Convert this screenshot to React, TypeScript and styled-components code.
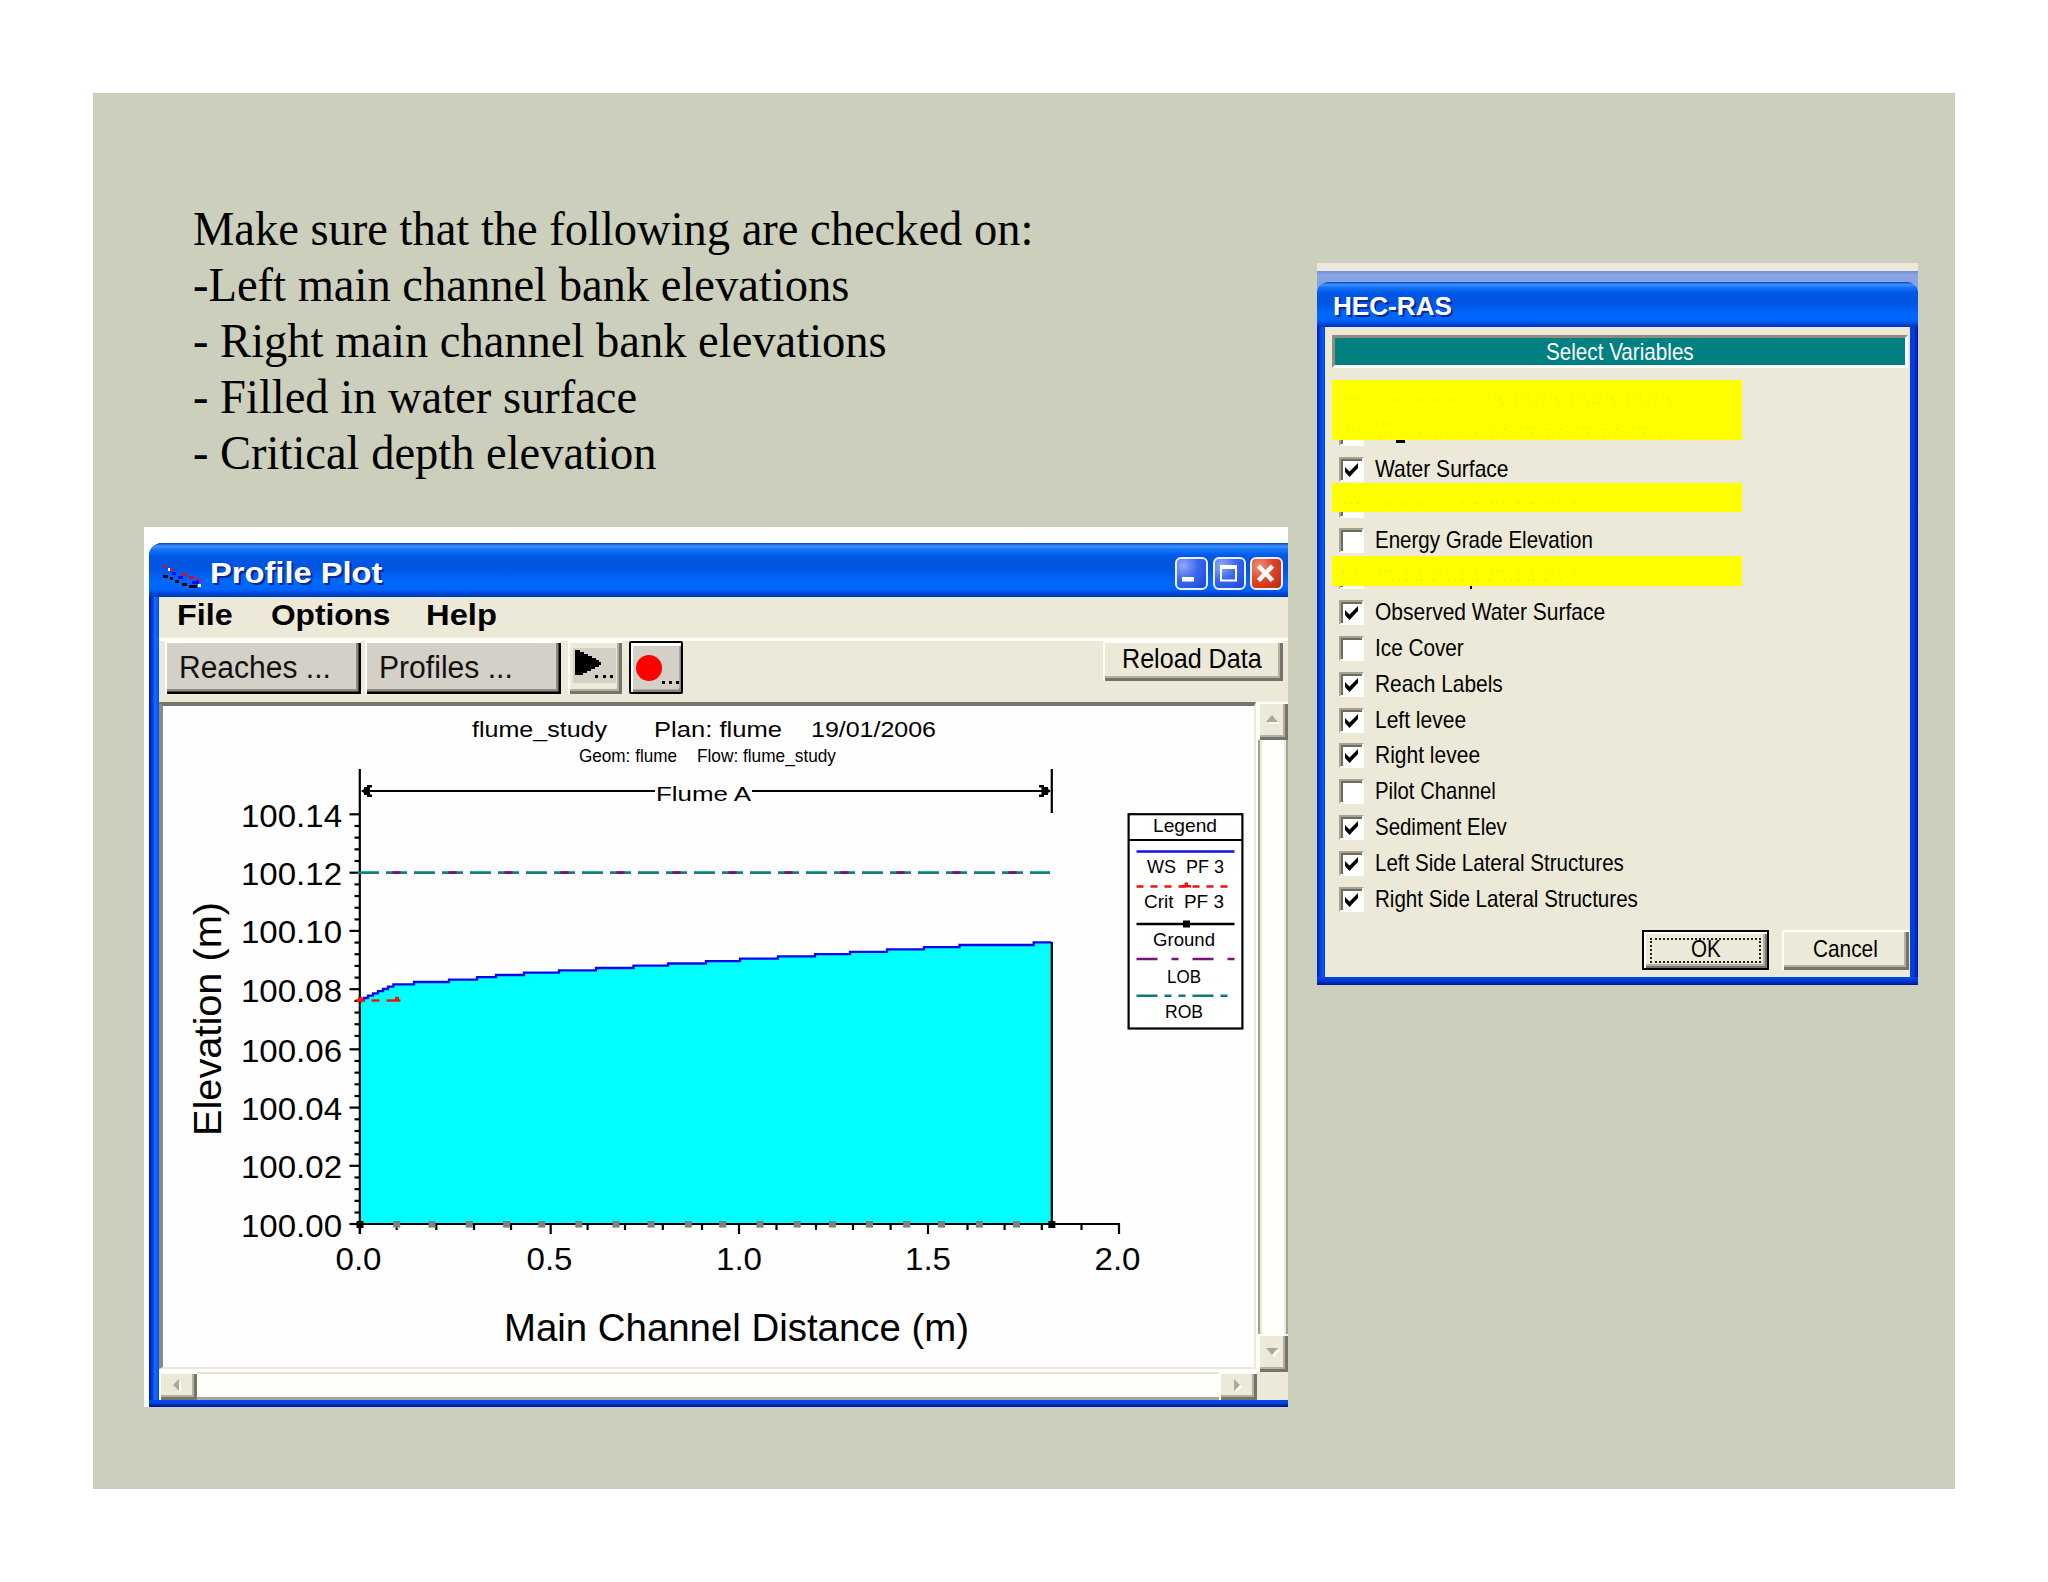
import React, { useLayoutEffect, useRef, useState } from "react";
import styled, { createGlobalStyle, css } from "styled-components";

const Global = createGlobalStyle`
  body { margin: 0; background: #fff; }
  * { box-sizing: border-box; }
`;

const sans = `"Liberation Sans", Arial, sans-serif`;

/* ---------- text that is stretched to a given width ---------- */

const FitBox = styled.span<{ $w: number }>`
  display: block;
  flex: none;
  width: ${(p) => p.$w}px;
  white-space: pre;
`;
const FitInner = styled.span`
  display: inline-block;
  transform-origin: 0 50%;
`;

function Fit({ w, children }: { w: number; children: string }) {
  const ref = useRef<HTMLSpanElement>(null);
  const [scale, setScale] = useState(1);
  useLayoutEffect(() => {
    if (ref.current) setScale(w / ref.current.offsetWidth);
  }, [w, children]);
  return (
    <FitBox $w={w}>
      <FitInner ref={ref} style={{ transform: `scaleX(${scale})` }}>
        {children}
      </FitInner>
    </FitBox>
  );
}

/* ---------- slide ---------- */

const Page = styled.div`
  width: 2048px;
  height: 1582px;
  padding: 93px 93px 93px 93px;
  background: #fff;
`;
const Slide = styled.main`
  display: flex;
  align-items: flex-start;
  gap: 29px;
  height: 1396px;
  padding-left: 51px;
  background: #cccfbc;
`;
const LeftColumn = styled.div`
  display: flex;
  flex-direction: column;
  gap: 46px;
  width: 1144px;
  padding-top: 108px;
`;
const Note = styled.div`
  padding-left: 49px;
  font: 48.6px/56px "Liberation Serif", "Times New Roman", serif;
  color: #000;
`;

/* ---------- shared window parts ---------- */

const titleGradient = css`
  background: linear-gradient(
    to bottom,
    #0b43c6 0,
    #3f93ff 6%,
    #1475f8 12%,
    #0058e6 24%,
    #0054e0 45%,
    #005ef2 60%,
    #0068ff 72%,
    #0064fb 86%,
    #0045d4 94%,
    #0034bd 100%
  );
`;
const raised = css`
  background: #ece9d8;
  box-shadow:
    inset 2px 2px 0 #fffffb,
    inset -3px -3px 0 #75736a,
    inset -5px -5px 0 #b3b0a1;
`;

/* ---------- profile plot window ---------- */

const PlotShot = styled.section`
  height: 880px;
  padding: 16px 0 0 5px;
  background: #fff;
`;
const PlotWindow = styled.div`
  display: flex;
  flex-direction: column;
  height: 864px;
  border-radius: 13px 0 0 0;
  overflow: hidden;
  background: #0044e0;
`;
const PlotTitle = styled.header`
  display: flex;
  align-items: center;
  flex: none;
  height: 54px;
  padding: 5px 5px 0 13px;
  ${titleGradient}
  font: bold 30px/44px ${sans};
  color: #fff;
  text-shadow: 2px 2px 0 #0a2a92;
`;
const TitleIcon = styled.svg`
  flex: none;
  width: 40px;
  height: 26px;
  margin: 6px 8px 0 0;
`;
const Captions = styled.div`
  display: flex;
  gap: 4.5px;
  margin-left: auto;
  padding-top: 2px;
`;
const Caption = styled.button<{ $close?: boolean }>`
  width: 33px;
  height: 33px;
  padding: 0;
  border: 2.5px solid #e9f0ff;
  border-radius: 6px;
  background: ${(p) =>
    p.$close
      ? "radial-gradient(circle at 25% 25%, #f0907a, #e0452a 45%, #b92a08)"
      : "radial-gradient(circle at 22% 22%, #92a9fa, #3c68ee 45%, #1845d8)"};
`;
const CaptionGlyph = styled.svg`
  display: block;
  width: 28px;
  height: 28px;
`;
const PlotBody = styled.div`
  display: flex;
  flex-direction: column;
  height: 803px;
  padding-left: 10px;
  background: linear-gradient(to right, #0019c0 0, #0033d6 3px, #1a6cff 6px, #0050e8 10px);
`;
const PlotFoot = styled.div`
  flex: 1;
  background: linear-gradient(to bottom, #0048ec, #003fdc 55%, #001c98 80%);
`;
const MenuBar = styled.nav`
  display: flex;
  flex: none;
  height: 44px;
  padding: 6px 0 0 18px;
  background: #ece9d8;
  border-bottom: 3px solid #fffffb;
  font: bold 29.5px/34px ${sans};
  color: #000;
`;
const MenuItem = styled.span<{ $gap: number }>`
  margin-right: ${(p) => p.$gap}px;
  line-height: 24px;
`;
const ToolBar = styled.div`
  display: flex;
  align-items: flex-start;
  flex: none;
  height: 61px;
  padding: 0 5px 0 6px;
  background: #ece9d8;
`;
const WideButton = styled.button`
  width: 196px;
  height: 53px;
  margin-right: 4px;
  padding: 0 0 0 14px;
  border: 0;
  background: #d4d0c8;
  box-shadow:
    inset 2px 2px 0 #fffffb,
    inset -2.5px -2.5px 0 #000,
    inset -5px -5px 0 #8c8a82;
  font: 31px/50px ${sans};
  color: #111;
  text-align: left;
`;
const IconButton = styled.button<{ $framed?: boolean }>`
  width: 54px;
  height: 53px;
  margin: 0 0 0 ${(p) => (p.$framed ? 7 : 3)}px;
  padding: 0;
  border: 0;
  ${raised}
  ${(p) =>
    p.$framed &&
    css`
      background: #d4d0c8;
      border-radius: 2px;
      box-shadow:
        inset 0 0 0 2px #000,
        inset 4px 5px 0 #fffffb,
        inset -3.5px -4.5px 0 #85837a;
    `}
`;
const ButtonArt = styled.svg`
  display: block;
  width: 54px;
  height: 53px;
`;
const ReloadButton = styled.button`
  width: 180px;
  height: 40px;
  margin-left: auto;
  padding: 0 0 4px 19px;
  border: 0;
  ${raised}
  font: 28px/36px ${sans};
  color: #000;
`;
const ViewRow = styled.div`
  display: flex;
  flex: none;
  height: 670px;
  background: #fffffb;
`;
const Canvas = styled.div`
  width: 1097px;
  height: 667px;
  border-top: 4px solid #77756b;
  border-left: 4px solid #8c8a80;
  border-right: 2px solid #ece9d8;
  border-bottom: 2px solid #ece9d8;
  background: #fefefe;
`;
const ChartSvg = styled.svg`
  display: block;
  width: 1091px;
  height: 660px;
  font-family: ${sans};
`;
const VScroll = styled.div`
  display: flex;
  flex-direction: column;
  justify-content: space-between;
  width: 30px;
  margin-left: 2px;
  background: linear-gradient(to right, #a3a092 0 2px, #ece9d8 2px 4px, #fffffb 4px 26px, #ece9d8 26px 28px, #a3a092 28px);
`;
const HRow = styled.div`
  display: flex;
  flex: none;
  height: 28px;
  background: #ece9d8;
`;
const HScroll = styled.div`
  display: flex;
  justify-content: space-between;
  width: 1098px;
  background: linear-gradient(to bottom, #e8e5d2 0 2px, #fffef9 2px 25px, #a9a698 25px);
`;
const ScrollButton = styled.button<{ $w: number; $h: number }>`
  display: flex;
  align-items: center;
  justify-content: center;
  width: ${(p) => p.$w}px;
  height: ${(p) => p.$h}px;
  padding: 0;
  border: 0;
  ${raised}
`;

type Dir = "up" | "down" | "left" | "right";
const arrows: Record<Dir, string> = {
  up: "M0 8 L6 1 L12 8Z",
  down: "M0 2 L12 2 L6 9Z",
  left: "M8 0 L2 6 L8 12Z",
  right: "M3 0 L9 6 L3 12Z",
};
function Scroller({ dir }: { dir: Dir }) {
  const vertical = dir === "up" || dir === "down";
  return (
    <ScrollButton $w={vertical ? 30 : 38} $h={vertical ? 38 : 28} aria-label={dir}>
      <svg width="14" height="14" viewBox="0 0 14 14">
        <path d={arrows[dir]} fill="#fffffb" transform="translate(2 2)" />
        <path d={arrows[dir]} fill="#aca899" />
      </svg>
    </ScrollButton>
  );
}

/* ---------- chart ---------- */

interface LabelProps {
  x: number;
  y: number;
  w: number;
  size: number;
  children: string;
}
function Label({ x, y, w, size, children }: LabelProps) {
  return (
    <text x={x} y={y} fontSize={size} textLength={w} lengthAdjust="spacingAndGlyphs" fill="#000">
      {children}
    </text>
  );
}

const yLabels: [string, number][] = [
  ["100.14", 814.3],
  ["100.12", 872.7],
  ["100.10", 930.9],
  ["100.08", 989.2],
  ["100.06", 1049.3],
  ["100.04", 1107.6],
  ["100.02", 1165.8],
  ["100.00", 1224],
];
const xLabels: [string, number, number][] = [
  ["0.0", 335.5, 46],
  ["0.5", 526.5, 46],
  ["1.0", 716, 46],
  ["1.5", 905, 46],
  ["2.0", 1094.5, 46],
];
const xMajor = [360, 550.7, 739, 928, 1119];
const xMinor = [396.7, 436.3, 474, 511, 587.6, 625, 662.8, 702, 776.5, 816, 853, 890.6, 967.5, 1004.6, 1041.8, 1081.5];
const stations = [396.7, 432, 469.3, 506.6, 541.8, 578.8, 616, 651, 688.3, 722.6, 760, 797.2, 832.4, 869.5, 906.7, 941.5, 979.4, 1016.5];

/* [x where the step starts, y of the step] */
const steps: [number, number][] = [
  [360, 1000], [364, 998], [368, 995.7], [373, 993.3], [378, 991.2], [383, 989], [388, 986.7],
  [393.4, 984.3], [414, 982], [449, 979.7], [477, 977.2], [496, 975], [524, 972.7],
  [559, 970.3], [596, 968], [633.5, 965.7], [668, 963.5], [706, 961.1], [740, 958.7],
  [778, 956.4], [815, 954.1], [850, 951.8], [887, 949.4], [924, 947.1], [959.5, 945],
  [1033.7, 942.4],
];
const surface =
  `M360 1000` + steps.map(([x, y]) => ` H${x} V${y}`).join("") + " H1051.5";

const legend: { text: string; y: number; base: number; x: number; w: number; color: string; dash?: string }[] = [
  { text: "WS  PF 3", y: 851.5, base: 873.3, x: 1147, w: 77, color: "#1010f0" },
  { text: "Crit  PF 3", y: 886.5, base: 908.3, x: 1144, w: 80, color: "#f01010", dash: "7 7" },
  { text: "Ground", y: 924, base: 945.7, x: 1153, w: 62, color: "#000" },
  { text: "LOB", y: 959, base: 982.5, x: 1167, w: 34, color: "#7a107a", dash: "21 14 7 14" },
  { text: "ROB", y: 995.7, base: 1017.5, x: 1165, w: 38, color: "#107a7a", dash: "21 7 7 7 7 7" },
];

function Chart() {
  const majorPitch = 58.4;
  return (
    <ChartSvg viewBox="163 706 1091 660">
      <Label x={472} y={736.5} w={135} size={22.5}>flume_study</Label>
      <Label x={654} y={736.5} w={128} size={22.5}>Plan: flume</Label>
      <Label x={811} y={736.5} w={125} size={22.5}>19/01/2006</Label>
      <Label x={579} y={761.5} w={98} size={18.5}>Geom: flume</Label>
      <Label x={697} y={761.5} w={139} size={18.5}>Flow: flume_study</Label>

      <path
        d={surface + " V1224 H360 Z"}
        fill="#00ffff"
      />
      <g stroke="#000" strokeWidth="2.2" fill="none">
        <path d="M359.8 769V1234" />
        <path d="M1051.8 769V813" />
        <path d="M1051.8 942V1224" />
        <path d="M350 1224H1120" />
        <path d="M362 791H655M752 791H1050" />
        {yLabels.map(([t, y], i) => (
          <g key={t}>
            <path d={`M349.5 ${y}H360`} />
            {i < yLabels.length - 1 &&
              [1, 2, 3, 4].map((k) => (
                <path key={k} d={`M354.5 ${y + (k * majorPitch) / 5}H360`} />
              ))}
          </g>
        ))}
        {xMajor.map((x) => (
          <path key={x} d={`M${x} 1223V1234`} />
        ))}
        {xMinor.map((x) => (
          <path key={x} d={`M${x} 1223V1230`} />
        ))}
      </g>
      <path d="M361 791L364 789V787H367V785H372V787.5H370V794.5H372V797H367V795H364V793Z" />
      <path d="M1051 791L1048 789V787H1044V785H1039V787.5H1041.5V794.5H1039V797H1044V795H1048V793Z" />
      <Label x={656} y={800.8} w={95} size={21}>Flume A</Label>

      <path d="M358 872.6H1050" stroke="#108080" strokeWidth="2.6" strokeDasharray="21 7" />
      <path d="M392.5 872.6H1050" stroke="#7a1070" strokeWidth="2.6" strokeDasharray="8 48" />

      <path d={surface} fill="none" stroke="#0808e8" strokeWidth="2.3" />
      <g fill="#f01408">
        <rect x="356" y="999.3" width="9" height="2.4" />
        <rect x="358" y="996.8" width="4.5" height="5.5" />
        <rect x="371.5" y="999.3" width="8" height="2.4" />
        <rect x="386.5" y="999.3" width="14" height="2.4" />
        <rect x="395" y="996.8" width="4" height="4" />
      </g>
      {stations.map((x) => (
        <rect key={x} x={x - 3.5} y={1221} width="7" height="6.6" fill="#808080" />
      ))}
      <rect x="356.5" y="1221" width="7" height="7" />
      <rect x="1048.3" y="1221" width="7" height="7" />

      {yLabels.map(([t, y]) => (
        <Label key={t} x={241} y={y + 12.5} w={101} size={32}>{t}</Label>
      ))}
      {xLabels.map(([t, x, w]) => (
        <Label key={t} x={x} y={1269.5} w={w} size={32}>{t}</Label>
      ))}
      <Label x={504} y={1341} w={465} size={38}>Main Channel Distance (m)</Label>
      <g transform="translate(220.5 1136) rotate(-90)">
        <Label x={0} y={0} w={234} size={38}>Elevation (m)</Label>
      </g>

      <rect x="1128.6" y="814.2" width="113.8" height="214.3" fill="#fff" stroke="#000" strokeWidth="2.2" />
      <path d="M1128 840H1243" stroke="#000" strokeWidth="2.2" />
      <Label x={1153} y={832} w={64} size={19}>Legend</Label>
      {legend.map((l) => (
        <g key={l.text}>
          <path
            d={`M1136.5 ${l.y}H1234.5`}
            stroke={l.color}
            strokeWidth="2.5"
            strokeDasharray={l.dash}
          />
          <text x={l.x} y={l.base} fontSize="19" textLength={l.w} lengthAdjust="spacingAndGlyphs" style={{ whiteSpace: "pre" }}>
            {l.text}
          </text>
        </g>
      ))}
      <path d="M1181 887.5V885H1184.5V882.5H1188V885H1191V887.5Z" fill="#f01010" />
      <rect x="1183" y="920.5" width="7" height="7" />
    </ChartSvg>
  );
}

/* ---------- HEC-RAS dialog ---------- */

const DialogShot = styled.section`
  width: 601px;
  margin-top: 170px;
  background: linear-gradient(to bottom, #ece9dc 0 8px, #6f8cd6 8px, #8aa5e2 12px, #7f9ce0 30px);
  padding-top: 19px;
`;
const DialogWindow = styled.div`
  height: 703px;
  border-radius: 12px 12px 0 0;
  overflow: hidden;
  padding: 0 8px 8px;
  background: linear-gradient(to right, #001cae 0, #0040e0 3px, #0a5cf8 6px, #003fd8 8px, #003fd8 592px, #0040e8 596px, #001a9c 601px);
`;
const DialogTitle = styled.header`
  height: 45px;
  margin: 0 -8px;
  padding: 5px 0 0 16px;
  ${titleGradient}
  font: bold 25px/38px ${sans};
  color: #fff;
  text-shadow: 2px 2px 0 #0a2a92;
`;
const DialogBody = styled.div`
  height: 650px;
  padding: 8px 1px 0 7px;
  background: #ece9d8;
`;
const DialogFoot = styled.div`
  height: 8px;
  margin: 0 -8px;
  background: linear-gradient(to bottom, #0048ec, #003cd8 40%, #001890);
`;
const Banner = styled.div`
  display: flex;
  justify-content: center;
  height: 33px;
  width: 576px;
  border: 3px solid;
  border-color: #8f8d82 #fffffb #fffffb #8f8d82;
  background: #008080;
  font: 24px/28px ${sans};
  color: #fff;
`;
const List = styled.ul`
  position: relative;
  margin: 17px 0 0;
  padding: 0 0 0 7px;
  list-style: none;
`;
const Row = styled.li`
  display: flex;
  align-items: flex-start;
  gap: 11px;
  height: 35.85px;
  font: 24px/23px ${sans};
  color: #000;
`;
const Box = styled.span`
  display: block;
  flex: none;
  width: 25px;
  height: 25px;
  border: 2px solid;
  border-color: #a6a393 #fffffb #fffffb #a6a393;
  background: #fff;
  box-shadow: inset 2px 2px 0 #6e6c61;
`;
const Tick = styled.svg`
  display: block;
  width: 21px;
  height: 21px;
`;
const Highlight = styled.div<{ $top: number; $h: number }>`
  position: absolute;
  left: 0;
  top: ${(p) => p.$top}px;
  width: 410px;
  height: ${(p) => p.$h}px;
  background: #ffff00;
`;
const Speckle = styled.svg`
  display: block;
  width: 410px;
  height: 100%;
`;
const Descender = styled.i<{ $left: number; $top: number; $w: number }>`
  position: absolute;
  left: ${(p) => p.$left}px;
  top: ${(p) => p.$top}px;
  width: ${(p) => p.$w}px;
  height: 3px;
  background: #000;
`;
const Actions = styled.div`
  display: flex;
  justify-content: flex-end;
  gap: 13px;
  margin-top: 7px;
`;
const DialogButton = styled.button<{ $focus?: boolean }>`
  display: flex;
  justify-content: center;
  width: 127px;
  height: 40px;
  padding: 8px;
  border: 0;
  ${raised}
  ${(p) =>
    p.$focus &&
    css`
      box-shadow:
        inset 0 0 0 2px #000,
        inset 4px 4px 0 #fffffb,
        inset -4px -4px 0 #75736a,
        inset -6px -6px 0 #b3b0a1;
    `}
  font: 24px/22px ${sans};
  color: #000;
`;
const Focus = styled.span`
  display: flex;
  justify-content: center;
  width: 111px;
  height: 25px;
  border: 2px dotted #222;
  line-height: 18px;
`;

interface Item {
  label?: string;
  w?: number;
  on?: boolean;
}
const items: Item[] = [
  {},
  {},
  { label: "Water Surface", w: 134, on: true },
  {},
  { label: "Energy Grade Elevation", w: 218 },
  {},
  { label: "Observed Water Surface", w: 230, on: true },
  { label: "Ice Cover", w: 89 },
  { label: "Reach Labels", w: 128, on: true },
  { label: "Left levee", w: 91, on: true },
  { label: "Right levee", w: 105, on: true },
  { label: "Pilot Channel", w: 121 },
  { label: "Sediment Elev", w: 132, on: true },
  { label: "Left Side Lateral Structures", w: 249, on: true },
  { label: "Right Side Lateral Structures", w: 263, on: true },
];

function Marker({ top, h, lines }: { top: number; h: number; lines: [number, number, number][] }) {
  return (
    <Highlight $top={top} $h={h}>
      <Speckle>
        {lines.map(([x1, x2, y], i) => (
          <path
            key={i}
            d={`M${x1} ${y}H${x2}`}
            stroke="#b8b000"
            strokeOpacity="0.35"
            strokeWidth="1.2"
            strokeDasharray="2 5 1 4 3 9 1 3"
          />
        ))}
      </Speckle>
    </Highlight>
  );
}

export default function App() {
  return (
    <>
      <Global />
      <Page>
        <Slide>
          <LeftColumn>
            <Note>
              <Fit w={840}>Make sure that the following are checked on:</Fit>
              <Fit w={656}>-Left main channel bank elevations</Fit>
              <Fit w={694}>- Right main channel bank elevations</Fit>
              <Fit w={444}>- Filled in water surface</Fit>
              <Fit w={463}>- Critical depth elevation</Fit>
            </Note>
            <PlotShot>
              <PlotWindow>
                <PlotTitle>
                  <TitleIcon viewBox="0 0 40 26">
                    <g fill="#d01030">
                      <path d="M1 2h3v3h-3zM7 5h4v3h-4zM20 10h5v3h-5zM27 13h5v3h-5zM34 16h5v3h-5z" />
                    </g>
                    <path d="M6 5h2v3h-2zM36 21h3v3h-3z" fill="#fff" />
                    <path d="M10 9h4v3h-4zM16 13h5v3h-5zM30 18h7v3h-7z" fill="#0010f0" />
                    <path d="M1 12h5v3h-5zM8 14h3v3h-3zM13 17h4v3h-4zM20 20h5v3h-5zM27 22h8v3h-8z" />
                  </TitleIcon>
                  <Fit w={172}>Profile Plot</Fit>
                  <Captions>
                    <Caption aria-label="Minimize">
                      <CaptionGlyph viewBox="0 0 28 28">
                        <rect x="5" y="17" width="12" height="4.5" fill="#fff" />
                      </CaptionGlyph>
                    </Caption>
                    <Caption aria-label="Maximize">
                      <CaptionGlyph viewBox="0 0 28 28">
                        <path d="M6 6.5H21V20.5H6Z" fill="none" stroke="#fff" strokeWidth="2" />
                        <path d="M5 7H22" stroke="#fff" strokeWidth="4" />
                      </CaptionGlyph>
                    </Caption>
                    <Caption $close aria-label="Close">
                      <CaptionGlyph viewBox="0 0 28 28">
                        <path d="M6.5 6L20.5 20.5M20.5 6L6.5 20.5" stroke="#fff" strokeWidth="4.6" />
                      </CaptionGlyph>
                    </Caption>
                  </Captions>
                </PlotTitle>
                <PlotBody>
                  <MenuBar>
                    <MenuItem $gap={38}><Fit w={56}>File</Fit></MenuItem>
                    <MenuItem $gap={36}><Fit w={119}>Options</Fit></MenuItem>
                    <MenuItem $gap={0}><Fit w={71}>Help</Fit></MenuItem>
                  </MenuBar>
                  <ToolBar>
                    <WideButton><Fit w={152}>Reaches ...</Fit></WideButton>
                    <WideButton><Fit w={134}>Profiles ...</Fit></WideButton>
                    <IconButton aria-label="Play">
                      <ButtonArt viewBox="0 0 54 53">
                        <rect x="5" y="7" width="43" height="35" fill="#d4d0c8" />
                        <path d="M7 9H12V11H16V13H20V15H24V17H28V19H31V21H33V24H31V26H27V28H23V30H19V32H15V34H7Z" />
                        <path d="M27 34h3v3h-3zM35 34h3v3h-3zM42 34h3v3h-3z" />
                      </ButtonArt>
                    </IconButton>
                    <IconButton $framed aria-label="Record">
                      <ButtonArt viewBox="0 0 54 53">
                        <ellipse cx="20" cy="27" rx="13" ry="13" fill="#f00" />
                        <path d="M33 40h3v3h-3zM40 40h3v3h-3zM47 40h3v3h-3z" />
                      </ButtonArt>
                    </IconButton>
                    <ReloadButton><Fit w={140}>Reload Data</Fit></ReloadButton>
                  </ToolBar>
                  <ViewRow>
                    <Canvas>
                      <Chart />
                    </Canvas>
                    <VScroll>
                      <Scroller dir="up" />
                      <Scroller dir="down" />
                    </VScroll>
                  </ViewRow>
                  <HRow>
                    <HScroll>
                      <Scroller dir="left" />
                      <Scroller dir="right" />
                    </HScroll>
                  </HRow>
                </PlotBody>
                <PlotFoot />
              </PlotWindow>
            </PlotShot>
          </LeftColumn>

          <DialogShot>
            <DialogWindow>
              <DialogTitle><Fit w={119}>HEC-RAS</Fit></DialogTitle>
              <DialogBody>
                <Banner><Fit w={148}>Select Variables</Fit></Banner>
                <List>
                  {items.map((it, i) => (
                    <Row key={i}>
                      <Box>
                        {it.on && (
                          <Tick viewBox="0 0 21 21">
                            <path d="M4 8L8.5 12.5L17 4V9L8.5 18L4 13Z" />
                          </Tick>
                        )}
                      </Box>
                      {it.label && <Fit w={it.w ?? 0}>{it.label}</Fit>}
                    </Row>
                  ))}
                  <Marker top={-5} h={60} lines={[[12, 30, 18], [50, 130, 20], [155, 350, 18], [170, 340, 23], [44, 66, 44], [14, 28, 50], [46, 340, 54], [160, 320, 49]]} />
                  <Marker top={98} h={29} lines={[[12, 28, 20], [46, 110, 21], [130, 250, 20]]} />
                  <Marker top={171} h={30} lines={[[10, 28, 15], [46, 250, 15], [60, 230, 24]]} />
                  <Descender $left={64} $top={55} $w={9} />
                  <Descender $left={138} $top={201} $w={2} />
                </List>
                <Actions>
                  <DialogButton $focus>
                    <Focus><Fit w={30}>OK</Fit></Focus>
                  </DialogButton>
                  <DialogButton><Fit w={65}>Cancel</Fit></DialogButton>
                </Actions>
              </DialogBody>
              <DialogFoot />
            </DialogWindow>
          </DialogShot>
        </Slide>
      </Page>
    </>
  );
}
